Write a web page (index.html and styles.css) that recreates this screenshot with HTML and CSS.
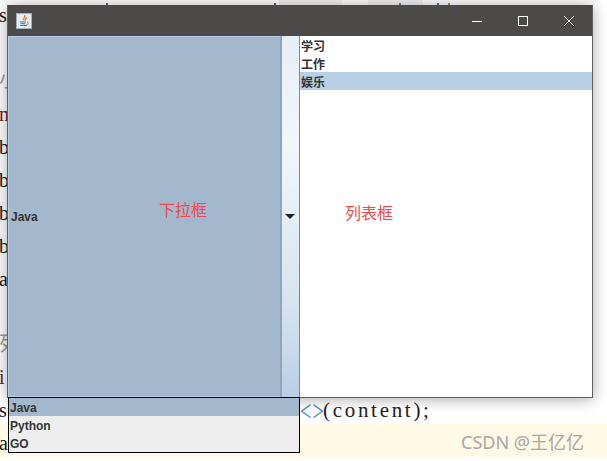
FILE: index.html
```html
<!DOCTYPE html>
<html lang="en">
  <head>
    <meta charset="UTF-8" />
    <meta name="viewport" content="width=device-width, initial-scale=1.0" />
    <title>下拉框 列表框</title>
    <link rel="stylesheet" href="styles.css">
  </head>
  <body>
    <div class="desktop">
      <!-- editor text behind the window -->
      <div class="code-strip"></div>
      <div class="top-band band-1"></div>
      <div class="top-band band-2"></div>
      <div class="tick tick-1"></div>
      <div class="tick tick-2"></div>
      <div class="tick tick-3"></div>
      <div class="tick tick-4"></div>
      <div class="tick tick-5"></div>
      <span class="code-char line-1">s</span>
      <span class="code-char code-grey line-2">小</span>
      <span class="code-char code-red line-3">m</span>
      <span class="code-char line-4">b</span>
      <span class="code-char line-5">b</span>
      <span class="code-char line-6">b</span>
      <span class="code-char line-7">b</span>
      <span class="code-char line-8">a</span>
      <span class="code-char code-grey line-9">列</span>
      <span class="code-char code-red line-10">i</span>
      <span class="code-char line-11">s</span>
      <span class="code-char line-12">a</span>
      <div class="code-line"><span class="diamond">&lt;&gt;</span><span>(content);</span></div>
      <div class="watermark">CSDN @王亿亿</div>

      <div class="window">
        <div class="titlebar">
          <div class="app-icon">
            <svg width="14" height="14" viewBox="0 0 14 14">
              <path d="M7.5 1 C9 3 5.5 4 7 6.5 M9 3 C10 4.5 8 5 8.5 6.5" fill="none" stroke="#e8701a" stroke-width="1.2" />
              <path d="M3 8 H9 M3.5 9.7 H8.5 M3 11.5 H10" stroke="#56738f" stroke-width="1" />
              <path d="M10 8 C12 8 12 10.5 9.5 10.5" fill="none" stroke="#56738f" stroke-width="0.8" />
            </svg>
          </div>
          <div class="win-buttons">
            <div class="win-btn"><svg width="12" height="12" viewBox="0 0 12 12"><path d="M1 6.5 H11" stroke="#fff" /></svg></div>
            <div class="win-btn"><svg width="12" height="12" viewBox="0 0 12 12"><rect x="1.5" y="1.5" width="9" height="9" fill="none" stroke="#fff" /></svg></div>
            <div class="win-btn"><svg width="12" height="12" viewBox="0 0 12 12"><path d="M1 1 L11 11 M11 1 L1 11" stroke="#fff" /></svg></div>
          </div>
        </div>
        <div class="content">
          <div class="combo">
            <div class="combo-value">
              <span class="combo-text">Java</span>
              <span class="note note-combo">下拉框</span>
            </div>
            <div class="combo-arrow"><div class="arrow"></div></div>
          </div>
          <div class="list">
            <div class="list-item">学习</div>
            <div class="list-item">工作</div>
            <div class="list-item selected">娱乐</div>
            <span class="note note-list">列表框</span>
          </div>
        </div>
      </div>

      <div class="popup">
        <div class="popup-item active">Java</div>
        <div class="popup-item">Python</div>
        <div class="popup-item">GO</div>
      </div>
    </div>
  </body>
</html>
```

FILE: styles.css
```css
body {
  margin: 0;
  background: #fff;
  font-family: "Liberation Sans", Arial, sans-serif;
}

.desktop {
  position: relative;
  width: 607px;
  height: 461px;
  overflow: hidden;
  background: #fff;
}

/* background editor */
.code-strip {
  position: absolute;
  left: 0;
  top: 424px;
  width: 607px;
  height: 33px;
  background: #fff9e6;
}
.top-band {
  position: absolute;
  top: 0;
  height: 5px;
  background: #f2f2f2;
}
.band-1 {
  left: 279px;
  width: 63px;
}
.band-2 {
  left: 368px;
  width: 55px;
}
.tick {
  position: absolute;
  top: 3px;
  width: 2px;
  height: 2px;
  background: #7a4a6a;
}
.tick-1 {
  left: 106px;
}
.tick-2 {
  left: 274px;
}
.tick-3 {
  left: 399px;
  background: #6a70a0;
}
.tick-4 {
  left: 437px;
  background: #5a5aa0;
}
.tick-5 {
  left: 448px;
  background: #b08a40;
}
.code-char {
  position: absolute;
  left: -1px;
  font-family: "Liberation Serif", "Noto Sans CJK SC", serif;
  font-size: 20px;
  line-height: 22px;
  color: #1a1a1a;
}
.code-grey {
  color: #9a9a9a;
}
.code-red {
  color: #6b1a2a;
}
.line-1 { top: 4px; }
.line-2 { top: 69px; }
.line-3 { top: 103px; }
.line-4 { top: 136px; }
.line-5 { top: 169px; }
.line-6 { top: 202px; }
.line-7 { top: 235px; }
.line-8 { top: 268px; }
.line-9 { top: 333px; }
.line-10 { top: 366px; }
.line-11 { top: 399px; }
.line-12 { top: 432px; }

.code-line {
  position: absolute;
  left: 300px;
  top: 399px;
  display: flex;
  font-family: "Liberation Serif", serif;
  font-size: 21px;
  line-height: 22px;
  letter-spacing: 2.7px;
  color: #222;
}
.diamond {
  width: 23px;
  font-size: 20px;
  letter-spacing: 1.3px;
  color: #3b86c6;
  transform: scaleY(1.5);
}
.watermark {
  position: absolute;
  left: 461px;
  top: 430px;
  font-family: "Noto Sans", "Noto Sans CJK SC", sans-serif;
  font-size: 18px;
  line-height: 24px;
  color: #a8a8a4;
}

/* java window */
.window {
  position: absolute;
  left: 7px;
  top: 5px;
  width: 586px;
  height: 393px;
  box-sizing: border-box;
  display: flex;
  flex-direction: column;
  border: 1px solid #5f5f5f;
  border-top: none;
  box-shadow: 0 1px 14px rgba(0, 0, 0, 0.35);
  background: #fff;
}

.titlebar {
  display: flex;
  align-items: center;
  justify-content: space-between;
  height: 31px;
  flex-shrink: 0;
  background: #4c4a48;
}
.app-icon {
  display: flex;
  align-items: center;
  justify-content: center;
  width: 14px;
  height: 14px;
  margin-left: 8px;
  background: #e6eef5;
  border: 1px solid #9fb2c4;
}
.win-buttons {
  display: flex;
}
.win-btn {
  display: flex;
  align-items: center;
  justify-content: center;
  width: 46px;
  height: 31px;
}

.content {
  display: flex;
  flex: 1;
  min-height: 0;
}

.combo {
  display: flex;
  width: 292px;
  flex-shrink: 0;
}
.combo-value {
  position: relative;
  display: flex;
  align-items: center;
  flex: 1;
  box-sizing: border-box;
  padding-left: 2px;
  background: #a3b8cc;
  border: 1px solid #b8cfe5;
  border-right-color: #8ea5bc;
}
.combo-text {
  margin-top: 1px;
  font-size: 12px;
  font-weight: bold;
  color: #333;
}
.combo-arrow {
  display: flex;
  align-items: center;
  justify-content: center;
  width: 19px;
  box-sizing: border-box;
  border-right: 1px solid #7a8a99;
  border-left: 1px solid #8ea5bc;
  background: linear-gradient(to bottom, #e6eef6 0%, #f1f6fb 30%, #d6e3f0 75%, #b8cfe5 100%);
}
.arrow {
  width: 0;
  height: 0;
  margin-right: 1px;
  border-left: 5px solid transparent;
  border-right: 5px solid transparent;
  border-top: 5px solid #222;
}

.list {
  position: relative;
  flex: 1;
  background: #fff;
}
.list-item {
  height: 18px;
  padding-left: 1px;
  font-family: "Noto Sans CJK SC", sans-serif;
  font-size: 12px;
  font-weight: bold;
  line-height: 20px;
  color: #333;
}
.list-item.selected {
  background: #b8cfe5;
}

.note {
  position: absolute;
  font-family: "Noto Sans CJK SC", sans-serif;
  font-size: 16px;
  line-height: 20px;
  color: #f04848;
}
.note-combo {
  left: 150px;
  top: 162px;
}
.note-list {
  left: 45px;
  top: 166px;
}

.popup {
  position: absolute;
  left: 8px;
  top: 397px;
  width: 292px;
  height: 56px;
  box-sizing: border-box;
  border: 1px solid #000;
  background: #eee;
}
.popup-item {
  height: 18px;
  padding-left: 1px;
  font-size: 12px;
  font-weight: bold;
  line-height: 20px;
  color: #333;
}
.popup-item.active {
  background: #a3b8cc;
}
```
